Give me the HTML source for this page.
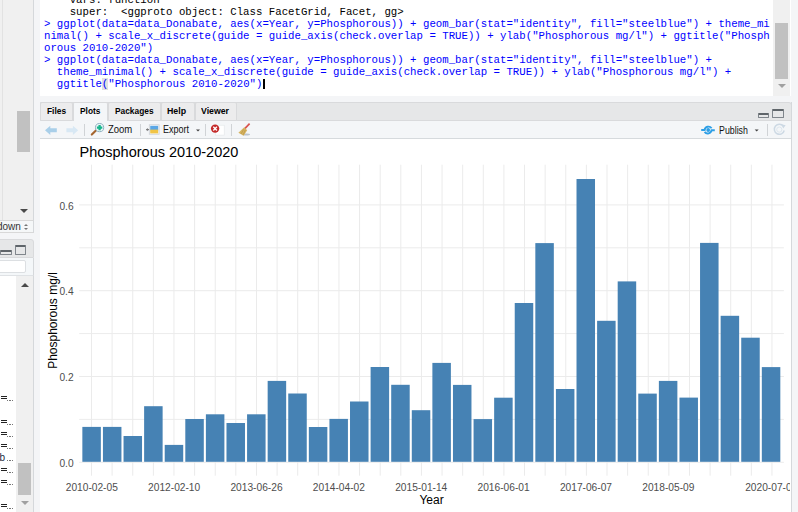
<!DOCTYPE html>
<html><head><meta charset="utf-8">
<style>
*{margin:0;padding:0;box-sizing:border-box}
html,body{width:798px;height:512px;overflow:hidden;background:#f4f5f7;font-family:"Liberation Sans",sans-serif;position:relative}
.a{position:absolute}
.con{left:40px;top:0;width:751px;height:96px;background:#fff;overflow:hidden}
.ln{position:absolute;left:4px;white-space:pre;font-family:"Liberation Mono",monospace;font-size:10.715px;line-height:12px;color:#0000ff}
.ln.k{color:#000}
.tabbar{left:40px;top:102px;width:751.5px;height:19px;background:#e6e7e8;border:1px solid #d9dadc;border-top-right-radius:3px}
.tab{position:absolute;top:-1px;height:19px;border-radius:2px 2px 0 0;background:#ececed;border:1px solid #d9dadc;font-weight:bold;font-size:9.6px;color:#000}
.tab span{position:absolute;top:2.2px;transform:scaleX(0.87);transform-origin:0 0;white-space:nowrap}
.tool{left:40px;top:121px;width:751.5px;height:18px;background:#f4f6f8;border-bottom:1px solid #d6dadd}
.plot{left:40px;top:139px;width:751px;height:373px;background:#fff}
.sep{position:absolute;top:3px;width:1px;height:12px;background:#d0d3d6}
.tt{position:absolute;font-size:10.4px;color:#111;top:3.0px;transform-origin:0 0;white-space:nowrap}
.eq{left:1px;width:5.5px;height:3.6px;border-top:1.3px solid #222;border-bottom:1.3px solid #222}
.dots{left:7px;width:6px;height:1px;background:repeating-linear-gradient(90deg,#777 0 1.2px,transparent 1.2px 2.4px)}
</style></head><body>
<!-- left strip -->
<div class="a" style="left:0;top:0;width:33.5px;height:232px;background:#f0f0f0;border-right:1px solid #d5d8db"></div>
<div class="a" style="left:2px;top:0;width:1px;height:220px;background:#e2e2e2"></div>
<div class="a" style="left:17px;top:111px;width:13px;height:41px;background:#c1c1c1"></div>
<div class="a" style="left:19.5px;top:209px;width:0;height:0;border-left:4px solid transparent;border-right:4px solid transparent;border-top:4.5px solid #4a4a4a"></div>
<div class="a" style="left:0;top:220px;width:33.5px;height:12.5px;background:#f5f7f8;border-top:1px solid #d8d8d8;border-bottom:1px solid #d8d8d8;border-right:1px solid #d5d8db;"></div>
<div class="a" style="left:-3px;top:220.5px;font-size:10px;color:#333;">down</div>
<div class="a" style="left:24px;top:224px;width:0;height:0;border-left:2px solid transparent;border-right:2px solid transparent;border-bottom:2px solid #777"></div>
<div class="a" style="left:24px;top:227.5px;width:0;height:0;border-left:2px solid transparent;border-right:2px solid transparent;border-top:2px solid #777"></div>

<div class="a" style="left:-2px;top:239px;width:35.5px;height:18.5px;background:#e6e7e8;border:1px solid #d9dadc;border-top-right-radius:3px"></div>
<div class="a" style="left:0;top:250px;width:11.5px;height:5px;border:1px solid #80868c;border-top:2px solid #5f656a;border-radius:1px"></div>
<div class="a" style="left:15px;top:245px;width:11px;height:10px;border:1px solid #80868c;border-top:2px solid #5f656a;border-radius:1px"></div>
<div class="a" style="left:0;top:257.5px;width:33.5px;height:18px;background:#f4f7f9;border-bottom:1px solid #dfe2e5;border-right:1px solid #d5d8db"></div>
<div class="a" style="left:-3px;top:260px;width:29px;height:13px;background:#fff;border:1px solid #dcdfe2;border-radius:2px"></div>
<div class="a" style="left:0;top:275.5px;width:16px;height:237px;background:#fff"></div>
<div class="a" style="left:16px;top:275.5px;width:17.5px;height:237px;background:#f0f0f0;border-right:1px solid #d5d8db"></div>
<div class="a" style="left:20.5px;top:283px;width:0;height:0;border-left:4px solid transparent;border-right:4px solid transparent;border-bottom:4.5px solid #4a4a4a"></div>
<div class="a" style="left:18px;top:463px;width:13px;height:32px;background:#c1c1c1"></div>
<div class="a" style="left:20.5px;top:501px;width:0;height:0;border-left:4px solid transparent;border-right:4px solid transparent;border-top:4.5px solid #a0a0a0"></div>

<!-- console -->
<div class="a con">
<div class="ln k" style="top:-5.8px">    vars: function</div>
<div class="ln k" style="top:6.1px">    super:  &lt;ggproto object: Class FacetGrid, Facet, gg&gt;</div>
<div class="ln" style="top:18px">&gt; ggplot(data=data_Donabate, aes(x=Year, y=Phosphorous)) + geom_bar(stat="identity", fill="steelblue") + theme_mi</div>
<div class="ln" style="top:29.9px">nimal() + scale_x_discrete(guide = guide_axis(check.overlap = TRUE)) + ylab("Phosphorous mg/l") + ggtitle("Phosph</div>
<div class="ln" style="top:41.8px">orous 2010-2020")</div>
<div class="ln" style="top:53.7px">&gt; ggplot(data=data_Donabate, aes(x=Year, y=Phosphorous)) + geom_bar(stat="identity", fill="steelblue") +</div>
<div class="ln" style="top:65.6px">  theme_minimal() + scale_x_discrete(guide = guide_axis(check.overlap = TRUE)) + ylab("Phosphorous mg/l") +</div>
<div class="ln" style="top:77.5px">  ggtitle<span style="background:#e0e0e0">(</span>"Phosphorous 2010-2020")<span style="display:inline-block;width:2px;height:10px;background:#000;vertical-align:-2px;margin-left:0.5px"></span></div>
<div class="a" style="left:733px;top:0;width:17px;height:96px;background:#f0f0f0"></div>
<div class="a" style="left:735px;top:23px;width:13px;height:56px;background:#c1c1c1"></div>
<div class="a" style="left:737.5px;top:84px;width:0;height:0;border-left:4px solid transparent;border-right:4px solid transparent;border-top:4.5px solid #a0a0a0"></div>
<div class="a" style="left:750.5px;top:0;width:1px;height:96px;background:#d5d8db"></div>
</div>

<!-- plot pane -->
<div class="a tabbar">
 <div class="tab" style="left:-1px;width:33px"><span style="left:6px">Files</span></div>
 <div class="tab" style="left:32px;width:35px;background:#f4f6f8;height:20px;border-bottom:none"><span style="left:6px">Plots</span></div>
 <div class="tab" style="left:67px;width:53px"><span style="left:6px">Packages</span></div>
 <div class="tab" style="left:120px;width:34px"><span style="left:5px;transform:scaleX(0.92)">Help</span></div>
 <div class="tab" style="left:154px;width:42px"><span style="left:5px;transform:scaleX(0.91)">Viewer</span></div>
 <div class="a" style="left:717px;top:10px;width:11px;height:5px;border:1px solid #80868c;border-top:2px solid #5f656a;border-radius:1px"></div>
 <div class="a" style="left:731px;top:6px;width:12px;height:9px;border:1px solid #80868c;border-top:2px solid #5f656a;border-radius:1px"></div>
</div>
<div class="a tool">
 <svg class="a" style="left:0;top:-1px;overflow:visible" width="751" height="19">
  <path d="M5 10.3 L10.3 5.7 L10.3 8.2 L16.8 8.2 L16.8 12.3 L10.3 12.3 L10.3 14.9 Z" fill="#a9cfe9"/>
  <path d="M38.2 10.3 L32.9 5.7 L32.9 8.2 L26.4 8.2 L26.4 12.3 L32.9 12.3 L32.9 14.9 Z" fill="#d8e8f4"/>
  <path d="M51.8 14.6 L56.2 10.2" stroke="#a5652e" stroke-width="2.1" stroke-linecap="round"/>
  <circle cx="59.6" cy="7.6" r="4.1" fill="#eef7f9" stroke="#8fb0c0" stroke-width="1"/>
  <path d="M56.9 7.6h5.4M59.6 4.9v5.4" stroke="#17b58c" stroke-width="2.3"/>
  <path d="M106.3 9.6 h3.2" stroke="#777" stroke-width="1.2"/>
  <path d="M106 9.6 l1.8 -1.6 v3.2z" fill="#777"/>
  <rect x="109.3" y="4.8" width="9.8" height="9.4" fill="#fff" stroke="#c9cdd2" stroke-width="0.8"/>
  <rect x="110.2" y="5.8" width="8" height="4.6" fill="#5aa7e6"/>
  <rect x="110.2" y="9.6" width="8" height="3.8" fill="#f1c445"/>
  <rect x="175.4" y="5.2" width="8.8" height="9.9" fill="#fff" stroke="#e2e5e8" stroke-width="0.6"/>
  <circle cx="175.1" cy="8.6" r="4.2" fill="#c42a2a"/>
  <path d="M173.3 6.8l3.6 3.6M176.9 6.8l-3.6 3.6" stroke="#fff" stroke-width="1.4"/>
  <ellipse cx="206" cy="14.6" rx="4" ry="1" fill="#8a9aab" opacity="0.55"/>
  <path d="M209.6 3.6 L204.8 8.6" stroke="#d9534f" stroke-width="1.7"/>
  <path d="M204.2 7.3 L207.2 10.3 L203.6 15.8 L198.4 12.8 Z" fill="#d6b460"/>
  <path d="M203.5 9.5 L201 14 M205.3 10 L203.2 14.8" stroke="#b99345" stroke-width="0.7"/>
  <path d="M156 9.5 l4 0 l-2 2z" fill="#444"/>
  <path d="M714.7 9.5 l4 0 l-2 2z" fill="#444"/>
  <path d="M661.2 10 H664.6 A3.9 3.9 0 0 1 671.6 8.2" stroke="#2d9fe6" stroke-width="1.9" fill="none"/>
  <path d="M674.8 10.2 H671.6 A3.9 3.9 0 0 1 664.6 11.9" stroke="#2d9fe6" stroke-width="1.9" fill="none"/>
  <circle cx="668.2" cy="10" r="1.9" fill="#2d9fe6"/>
  <path d="M743.3 6.2 A5 5 0 1 0 744.2 10.5" stroke="#cdd9e4" stroke-width="1.5" fill="none"/>
  <path d="M741.5 4.2 L745.6 5.2 L743.2 8.4 Z" fill="#cdd9e4"/>
  <circle cx="739.3" cy="9.6" r="2.6" stroke="#dde6ee" stroke-width="1" fill="none"/>
 </svg>
 <div class="sep" style="left:44px"></div>
 <div class="sep" style="left:100px"></div>
 <div class="sep" style="left:165px"></div>
 <div class="sep" style="left:191px"></div>
 <div class="sep" style="left:727px"></div>
 <div class="tt" style="left:68.2px;transform:scaleX(0.914)">Zoom</div>
 <div class="tt" style="left:122.8px;transform:scaleX(0.867)">Export</div>
 <div class="tt" style="left:678.8px;top:3.8px;transform:scaleX(0.848)">Publish</div>
</div>
<div class="a plot"></div>
<div class="a" style="left:791px;top:102px;width:1px;height:410px;background:#d5d8db"></div>
<svg class="a" style="left:0;top:0" width="790" height="512">
<line x1="79.2" x2="783.9" y1="419.40" y2="419.40" stroke="#ececec" stroke-width="1"/>
<line x1="79.2" x2="783.9" y1="333.60" y2="333.60" stroke="#ececec" stroke-width="1"/>
<line x1="79.2" x2="783.9" y1="247.80" y2="247.80" stroke="#ececec" stroke-width="1"/>
<line x1="79.2" x2="783.9" y1="462.30" y2="462.30" stroke="#ebebeb" stroke-width="1"/>
<line x1="79.2" x2="783.9" y1="376.50" y2="376.50" stroke="#ebebeb" stroke-width="1"/>
<line x1="79.2" x2="783.9" y1="290.70" y2="290.70" stroke="#ebebeb" stroke-width="1"/>
<line x1="79.2" x2="783.9" y1="204.90" y2="204.90" stroke="#ebebeb" stroke-width="1"/>
<line x1="91.50" x2="91.50" y1="164.7" y2="475.7" stroke="#ebebeb" stroke-width="1"/>
<line x1="112.12" x2="112.12" y1="164.7" y2="475.7" stroke="#ebebeb" stroke-width="1"/>
<line x1="132.74" x2="132.74" y1="164.7" y2="475.7" stroke="#ebebeb" stroke-width="1"/>
<line x1="153.36" x2="153.36" y1="164.7" y2="475.7" stroke="#ebebeb" stroke-width="1"/>
<line x1="173.98" x2="173.98" y1="164.7" y2="475.7" stroke="#ebebeb" stroke-width="1"/>
<line x1="194.60" x2="194.60" y1="164.7" y2="475.7" stroke="#ebebeb" stroke-width="1"/>
<line x1="215.22" x2="215.22" y1="164.7" y2="475.7" stroke="#ebebeb" stroke-width="1"/>
<line x1="235.84" x2="235.84" y1="164.7" y2="475.7" stroke="#ebebeb" stroke-width="1"/>
<line x1="256.46" x2="256.46" y1="164.7" y2="475.7" stroke="#ebebeb" stroke-width="1"/>
<line x1="277.08" x2="277.08" y1="164.7" y2="475.7" stroke="#ebebeb" stroke-width="1"/>
<line x1="297.70" x2="297.70" y1="164.7" y2="475.7" stroke="#ebebeb" stroke-width="1"/>
<line x1="318.32" x2="318.32" y1="164.7" y2="475.7" stroke="#ebebeb" stroke-width="1"/>
<line x1="338.94" x2="338.94" y1="164.7" y2="475.7" stroke="#ebebeb" stroke-width="1"/>
<line x1="359.56" x2="359.56" y1="164.7" y2="475.7" stroke="#ebebeb" stroke-width="1"/>
<line x1="380.18" x2="380.18" y1="164.7" y2="475.7" stroke="#ebebeb" stroke-width="1"/>
<line x1="400.80" x2="400.80" y1="164.7" y2="475.7" stroke="#ebebeb" stroke-width="1"/>
<line x1="421.42" x2="421.42" y1="164.7" y2="475.7" stroke="#ebebeb" stroke-width="1"/>
<line x1="442.04" x2="442.04" y1="164.7" y2="475.7" stroke="#ebebeb" stroke-width="1"/>
<line x1="462.66" x2="462.66" y1="164.7" y2="475.7" stroke="#ebebeb" stroke-width="1"/>
<line x1="483.28" x2="483.28" y1="164.7" y2="475.7" stroke="#ebebeb" stroke-width="1"/>
<line x1="503.90" x2="503.90" y1="164.7" y2="475.7" stroke="#ebebeb" stroke-width="1"/>
<line x1="524.52" x2="524.52" y1="164.7" y2="475.7" stroke="#ebebeb" stroke-width="1"/>
<line x1="545.14" x2="545.14" y1="164.7" y2="475.7" stroke="#ebebeb" stroke-width="1"/>
<line x1="565.76" x2="565.76" y1="164.7" y2="475.7" stroke="#ebebeb" stroke-width="1"/>
<line x1="586.38" x2="586.38" y1="164.7" y2="475.7" stroke="#ebebeb" stroke-width="1"/>
<line x1="607.00" x2="607.00" y1="164.7" y2="475.7" stroke="#ebebeb" stroke-width="1"/>
<line x1="627.62" x2="627.62" y1="164.7" y2="475.7" stroke="#ebebeb" stroke-width="1"/>
<line x1="648.24" x2="648.24" y1="164.7" y2="475.7" stroke="#ebebeb" stroke-width="1"/>
<line x1="668.86" x2="668.86" y1="164.7" y2="475.7" stroke="#ebebeb" stroke-width="1"/>
<line x1="689.48" x2="689.48" y1="164.7" y2="475.7" stroke="#ebebeb" stroke-width="1"/>
<line x1="710.10" x2="710.10" y1="164.7" y2="475.7" stroke="#ebebeb" stroke-width="1"/>
<line x1="730.72" x2="730.72" y1="164.7" y2="475.7" stroke="#ebebeb" stroke-width="1"/>
<line x1="751.34" x2="751.34" y1="164.7" y2="475.7" stroke="#ebebeb" stroke-width="1"/>
<line x1="771.96" x2="771.96" y1="164.7" y2="475.7" stroke="#ebebeb" stroke-width="1"/>
<rect x="82.35" y="426.90" width="18.5" height="34.90" fill="#4682b4"/>
<rect x="102.94" y="426.90" width="18.5" height="34.90" fill="#4682b4"/>
<rect x="123.53" y="436.00" width="18.5" height="25.80" fill="#4682b4"/>
<rect x="144.12" y="406.20" width="18.5" height="55.60" fill="#4682b4"/>
<rect x="164.71" y="444.90" width="18.5" height="16.90" fill="#4682b4"/>
<rect x="185.30" y="419.00" width="18.5" height="42.80" fill="#4682b4"/>
<rect x="205.89" y="414.30" width="18.5" height="47.50" fill="#4682b4"/>
<rect x="226.48" y="423.00" width="18.5" height="38.80" fill="#4682b4"/>
<rect x="247.07" y="414.30" width="18.5" height="47.50" fill="#4682b4"/>
<rect x="267.66" y="380.90" width="18.5" height="80.90" fill="#4682b4"/>
<rect x="288.25" y="393.50" width="18.5" height="68.30" fill="#4682b4"/>
<rect x="308.84" y="427.00" width="18.5" height="34.80" fill="#4682b4"/>
<rect x="329.43" y="418.90" width="18.5" height="42.90" fill="#4682b4"/>
<rect x="350.02" y="401.50" width="18.5" height="60.30" fill="#4682b4"/>
<rect x="370.61" y="367.00" width="18.5" height="94.80" fill="#4682b4"/>
<rect x="391.20" y="384.80" width="18.5" height="77.00" fill="#4682b4"/>
<rect x="411.79" y="410.20" width="18.5" height="51.60" fill="#4682b4"/>
<rect x="432.38" y="362.90" width="18.5" height="98.90" fill="#4682b4"/>
<rect x="452.97" y="384.90" width="18.5" height="76.90" fill="#4682b4"/>
<rect x="473.56" y="419.10" width="18.5" height="42.70" fill="#4682b4"/>
<rect x="494.15" y="397.70" width="18.5" height="64.10" fill="#4682b4"/>
<rect x="514.74" y="303.00" width="18.5" height="158.80" fill="#4682b4"/>
<rect x="535.33" y="243.10" width="18.5" height="218.70" fill="#4682b4"/>
<rect x="555.92" y="389.00" width="18.5" height="72.80" fill="#4682b4"/>
<rect x="576.51" y="179.00" width="18.5" height="282.80" fill="#4682b4"/>
<rect x="597.10" y="320.80" width="18.5" height="141.00" fill="#4682b4"/>
<rect x="617.69" y="281.40" width="18.5" height="180.40" fill="#4682b4"/>
<rect x="638.28" y="393.60" width="18.5" height="68.20" fill="#4682b4"/>
<rect x="658.87" y="380.90" width="18.5" height="80.90" fill="#4682b4"/>
<rect x="679.46" y="397.60" width="18.5" height="64.20" fill="#4682b4"/>
<rect x="700.05" y="242.90" width="18.5" height="218.90" fill="#4682b4"/>
<rect x="720.64" y="315.80" width="18.5" height="146.00" fill="#4682b4"/>
<rect x="741.23" y="337.70" width="18.5" height="124.10" fill="#4682b4"/>
<rect x="761.82" y="367.10" width="18.5" height="94.70" fill="#4682b4"/>
<g font-family="Liberation Sans" font-size="10.2px" fill="#4d4d4d">
<text x="91.80" y="490.6" text-anchor="middle">2010-02-05</text>
<text x="174.16" y="490.6" text-anchor="middle">2012-02-10</text>
<text x="256.52" y="490.6" text-anchor="middle">2013-06-26</text>
<text x="338.88" y="490.6" text-anchor="middle">2014-04-02</text>
<text x="421.24" y="490.6" text-anchor="middle">2015-01-14</text>
<text x="503.60" y="490.6" text-anchor="middle">2016-06-01</text>
<text x="585.96" y="490.6" text-anchor="middle">2017-06-07</text>
<text x="668.32" y="490.6" text-anchor="middle">2018-05-09</text>
<text x="771.27" y="490.6" text-anchor="middle">2020-07-07</text>
<text x="73.6" y="466.90" text-anchor="end">0.0</text>
<text x="73.6" y="381.10" text-anchor="end">0.2</text>
<text x="73.6" y="295.30" text-anchor="end">0.4</text>
<text x="73.6" y="209.50" text-anchor="end">0.6</text>
</g>
<text x="79.5" y="156.5" font-family="Liberation Sans" font-size="14.5px" fill="#000">Phosphorous 2010-2020</text>
<text x="431.6" y="503.9" font-family="Liberation Sans" font-size="12px" fill="#000" text-anchor="middle">Year</text>
<text transform="translate(56.8,320.5) rotate(-90)" font-family="Liberation Sans" font-size="12px" fill="#000" text-anchor="middle">Phosphorous mg/l</text>
</svg>

<!-- left list items -->
<div class="a eq" style="top:395.5px"></div><div class="a dots" style="top:399.9px"></div>
<div class="a eq" style="top:419.6px"></div><div class="a dots" style="top:424.0px"></div>
<div class="a eq" style="top:431.7px"></div><div class="a dots" style="top:436.1px"></div>
<div class="a eq" style="top:443.7px"></div><div class="a dots" style="top:448.1px"></div>
<div class="a eq" style="top:467.7px"></div><div class="a dots" style="top:472.1px"></div>
<div class="a eq" style="top:479.7px"></div><div class="a dots" style="top:484.1px"></div>
<div class="a eq" style="top:503.6px"></div><div class="a dots" style="top:508.0px"></div>
<div class="a" style="left:-0.5px;top:452px;font-size:10px;color:#1a2a40">b</div><div class="a dots" style="top:459.8px"></div>
</body></html>
